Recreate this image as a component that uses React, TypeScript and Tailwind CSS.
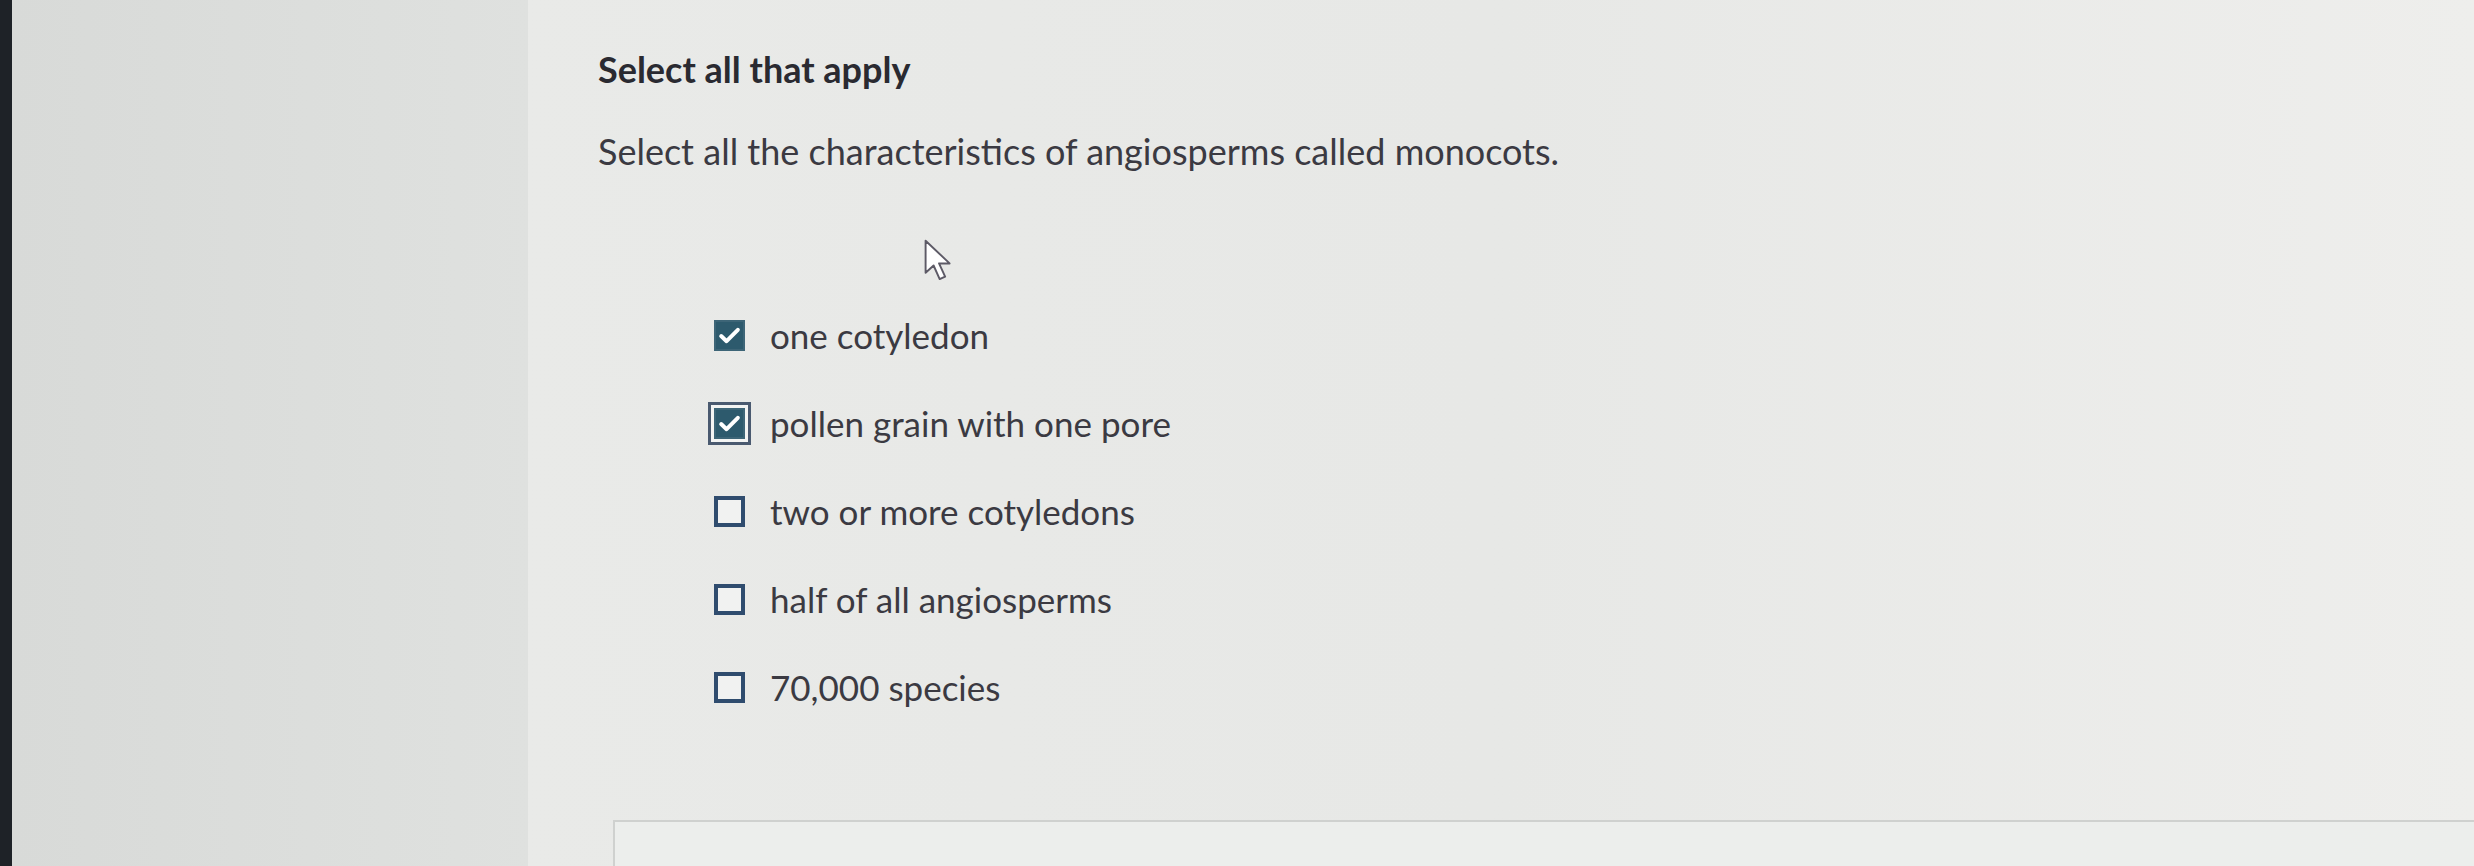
import React from 'react';

const options = [
  { label: 'one cotyledon', checked: true, focused: false },
  { label: 'pollen grain with one pore', checked: true, focused: true },
  { label: 'two or more cotyledons', checked: false, focused: false },
  { label: 'half of all angiosperms', checked: false, focused: false },
  { label: '70,000 species', checked: false, focused: false },
];

const Check = () => (
  <svg viewBox="0 0 24 24" className="w-[25px] h-[25px]" fill="none" stroke="#ffffff" strokeWidth="3.8" strokeLinecap="round" strokeLinejoin="round">
    <path d="M4 12.5l5.2 5L20 6.5" />
  </svg>
);

const Box: React.FC<{ checked: boolean; focused: boolean }> = ({ checked, focused }) => {
  const inner = checked ? (
    <div className="w-[31px] h-[31px] bg-[#2d5a6d] border-2 border-[#3d6577] flex items-center justify-center">
      <Check />
    </div>
  ) : (
    <div className="w-[31px] h-[31px] border-[4px] border-[#2f4c6e] bg-[#f1f2f1]" />
  );
  if (focused) {
    return (
      <div className="w-[43px] h-[43px] border-[3px] border-[#4a5a70] bg-[#f3f4f3] flex items-center justify-center -ml-[6px]">
        {inner}
      </div>
    );
  }
  return inner;
};

export default function App() {
  return (
    <div className="relative flex w-[2474px] h-[866px] overflow-hidden bg-[#e8e9e7]" style={{ fontFamily: 'Lato, "Open Sans", sans-serif' }}>
      <div className="w-[12px] h-full bg-[#1e2227]" />
      <div className="w-[516px] h-full bg-gradient-to-r from-[#d8dad8] to-[#dfe1df]" />
      <main className="flex-1 h-full flex flex-col pl-[70px] bg-gradient-to-r from-[#e9eae8] via-[#e7e8e6] to-[#eeeeec]">
        <h1 className="mt-[47px] text-[36px] leading-[44px] font-bold text-[#2a2a31]">Select all that apply</h1>
        <p className="mt-[36px] text-[36px] leading-[48px] text-[#3b3a42]">
          Select all the characteristics of angiosperms called monocots.
        </p>
        <ul className="mt-[116px] pl-[116px] flex flex-col">
          {options.map((o) => (
            <li key={o.label} className="h-[88px] flex items-center">
              <div className="w-[56px] flex items-center">
                <Box checked={o.checked} focused={o.focused} />
              </div>
              <span className="text-[35px] leading-[44px] text-[#3b3a42]">{o.label}</span>
            </li>
          ))}
        </ul>
        <div className="mt-auto ml-[15px] h-[46px] border-t-2 border-l-2 border-[#cfd1cf] bg-[#eceeec]" />
      </main>
      <svg className="absolute left-[924px] top-[239px] w-[32px] h-[45px]" viewBox="0 0 20 28" fill="#ffffff" stroke="#5d5a66" strokeWidth="1.2" strokeLinejoin="round">
        <path d="M1 1v20l5-4.5 3.8 8.5 3.4-1.6-3.8-8.2H16z" />
      </svg>
    </div>
  );
}
